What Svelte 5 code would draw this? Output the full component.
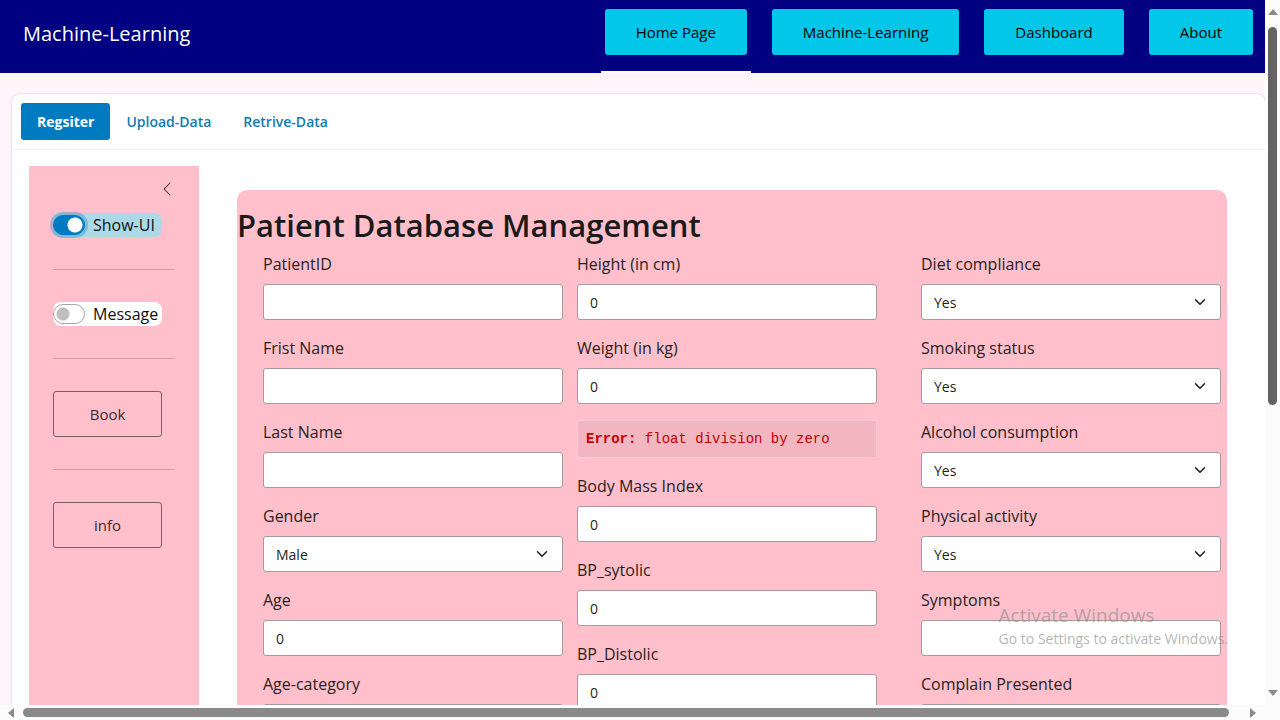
<script lang="ts">
	type Field = {
		id: string;
		label: string;
		type: 'text' | 'number' | 'select';
		value: string;
		options?: string[];
	};

	const pages = ['Home Page', 'Machine-Learning', 'Dashboard', 'About'];
	const tabs = ['Regsiter', 'Upload-Data', 'Retrive-Data'];
	const yesNo = ['Yes', 'No'];

	let activePage = $state('Home Page');
	let activeTab = $state('Regsiter');
	let showUi = $state(true);
	let showMessage = $state(false);

	let personal: Field[] = $state([
		{ id: 'patient_id', label: 'PatientID', type: 'text', value: '' },
		{ id: 'first_name', label: 'Frist Name', type: 'text', value: '' },
		{ id: 'last_name', label: 'Last Name', type: 'text', value: '' },
		{ id: 'gender', label: 'Gender', type: 'select', value: 'Male', options: ['Male', 'Female'] },
		{ id: 'age', label: 'Age', type: 'number', value: '0' },
		{ id: 'age_category', label: 'Age-category', type: 'text', value: '' }
	]);

	let body: Field[] = $state([
		{ id: 'height', label: 'Height (in cm)', type: 'number', value: '0' },
		{ id: 'weight', label: 'Weight (in kg)', type: 'number', value: '0' }
	]);

	let vitals: Field[] = $state([
		{ id: 'bmi', label: 'Body Mass Index', type: 'number', value: '0' },
		{ id: 'bp_systolic', label: 'BP_sytolic', type: 'number', value: '0' },
		{ id: 'bp_diastolic', label: 'BP_Distolic', type: 'number', value: '0' }
	]);

	let lifestyle: Field[] = $state([
		{ id: 'diet', label: 'Diet compliance', type: 'select', value: 'Yes', options: yesNo },
		{ id: 'smoking', label: 'Smoking status', type: 'select', value: 'Yes', options: yesNo },
		{ id: 'alcohol', label: 'Alcohol consumption', type: 'select', value: 'Yes', options: yesNo },
		{ id: 'activity', label: 'Physical activity', type: 'select', value: 'Yes', options: yesNo },
		{ id: 'symptoms', label: 'Symptoms', type: 'text', value: '' },
		{ id: 'complain', label: 'Complain Presented', type: 'text', value: '' }
	]);
</script>

{#snippet fieldList(fields: Field[])}
	{#each fields as field (field.id)}
		<div class="field">
			<label for={field.id}>{field.label}</label>
			{#if field.type === 'select'}
				<select id={field.id} class="control" bind:value={field.value}>
					{#each field.options ?? [] as option}
						<option value={option}>{option}</option>
					{/each}
				</select>
			{:else}
				<input
					id={field.id}
					class="control"
					inputmode={field.type === 'number' ? 'decimal' : 'text'}
					bind:value={field.value}
				/>
			{/if}
		</div>
	{/each}
{/snippet}

<div class="window">
	<div class="view">
		<header class="navbar">
			<span class="brand">Machine-Learning</span>
			<nav>
				{#each pages as page}
					<div class="nav-item" class:active={activePage === page}>
						<button class="nav-btn" onclick={() => (activePage = page)}>{page}</button>
					</div>
				{/each}
			</nav>
		</header>

		<main class="card">
			<div class="card-header" role="tablist">
				{#each tabs as tab}
					<button
						class="pill"
						class:active={activeTab === tab}
						role="tab"
						aria-selected={activeTab === tab}
						onclick={() => (activeTab = tab)}>{tab}</button
					>
				{/each}
			</div>

			<div class="card-body">
				<aside class="sidebar">
					<button class="collapse" aria-label="Toggle sidebar">
						<svg width="16" height="16" viewBox="0 0 16 16" fill="currentColor">
							<path
								d="M11.354 1.646a.5.5 0 0 1 0 .708L5.707 8l5.647 5.646a.5.5 0 0 1-.708.708l-6-6a.5.5 0 0 1 0-.708l6-6a.5.5 0 0 1 .708 0z"
							/>
						</svg>
					</button>
					<label class="switch blue">
						<input type="checkbox" role="switch" class="ring" bind:checked={showUi} />
						<span>Show-UI</span>
					</label>
					<hr />
					<label class="switch">
						<input type="checkbox" role="switch" bind:checked={showMessage} />
						<span>Message</span>
					</label>
					<hr />
					<button class="side-btn">Book</button>
					<hr />
					<button class="side-btn">info</button>
				</aside>

				<section class="panel">
					<h1>Patient Database Management</h1>
					<div class="columns">
						<div class="column">{@render fieldList(personal)}</div>
						<div class="column">
							{@render fieldList(body)}
							<pre class="error"><strong>Error:</strong> float division by zero</pre>
							{@render fieldList(vitals)}
						</div>
						<div class="column last">{@render fieldList(lifestyle)}</div>
					</div>
				</section>
			</div>
		</main>
	</div>

	<div class="scroll-y" aria-hidden="true">
		<svg width="10" height="6" viewBox="0 0 10 6"><path d="M5 0l5 6H0z" /></svg>
		<div class="track"><div class="thumb"></div></div>
		<svg width="10" height="6" viewBox="0 0 10 6"><path d="M0 0h10L5 6z" /></svg>
	</div>
	<div class="scroll-x" aria-hidden="true">
		<svg width="6" height="10" viewBox="0 0 6 10"><path d="M6 0v10L0 5z" /></svg>
		<div class="track"><div class="thumb"></div></div>
		<svg width="6" height="10" viewBox="0 0 6 10"><path d="M0 0l6 5-6 5z" /></svg>
	</div>

	<div class="watermark">
		<div class="watermark-title">Activate Windows</div>
		<div>Go to Settings to activate Windows.</div>
	</div>
</div>

<style>
	:global(body) {
		margin: 0;
	}

	.window {
		position: relative;
		display: grid;
		grid-template-columns: minmax(0, 1fr) 15px;
		grid-template-rows: minmax(0, 1fr) 15px;
		height: 100vh;
		background: #fcfcfc;
		font-family: 'Open Sans', 'Noto Sans', sans-serif;
		font-size: 16px;
		line-height: 24px;
		color: #1d1f21;
	}

	.window * {
		box-sizing: border-box;
	}

	button,
	input,
	select {
		font-family: inherit;
	}

	button {
		cursor: pointer;
	}

	.view {
		display: flex;
		flex-direction: column;
		overflow: hidden;
		background: #fff5fa;
	}

	.navbar {
		display: flex;
		flex-shrink: 0;
		justify-content: space-between;
		height: 73px;
		padding: 0 8px 0 23px;
		background: #000080;
	}

	.brand {
		padding-top: 22px;
		font-size: 20px;
		color: #fff;
	}

	nav {
		display: flex;
		gap: 17px;
	}

	.nav-item {
		padding: 9px 4px 0;
		border-bottom: 2px solid transparent;
	}

	.nav-item.active {
		border-bottom-color: #fff;
	}

	.nav-btn {
		height: 46px;
		padding: 0 31px;
		border: 0;
		border-radius: 3px;
		background: #03c7e8;
		color: #000;
		font-size: 15px;
		font-weight: 500;
	}

	.card {
		flex: 1;
		display: flex;
		flex-direction: column;
		min-height: 0;
		margin: 21px 0 0 12px;
		border-radius: 8px 8px 0 0;
		background: #fff;
		box-shadow: 0 0 2px rgba(0, 0, 0, 0.25);
	}

	.card-header {
		display: flex;
		padding: 9px;
		border-bottom: 1px solid #f2f2f2;
	}

	.pill {
		height: 37px;
		padding: 0 16px;
		border: 0;
		border-radius: 3px;
		background: transparent;
		color: #1279b3;
		font-size: 14px;
		font-weight: 600;
	}

	.pill.active {
		background: #007bc2;
		color: #fff;
		font-weight: 700;
	}

	.card-body {
		flex: 1;
		display: flex;
		min-height: 0;
		gap: 38px;
		padding: 16px 38px 0 17px;
	}

	.sidebar {
		display: flex;
		flex-direction: column;
		align-items: flex-start;
		width: 170px;
		flex-shrink: 0;
		padding: 15px 24px 0 24px;
		background: #ffc0cb;
	}

	.collapse {
		display: flex;
		align-self: flex-end;
		padding: 0;
		margin-bottom: 16px;
		border: 0;
		background: none;
		color: #3c2a2e;
	}

	.switch {
		display: flex;
		align-items: center;
		gap: 8px;
		width: 109px;
		border-radius: 8px;
		background: #fff;
		color: #111;
	}

	.switch.blue {
		background: #add8e6;
	}

	.switch input {
		appearance: none;
		width: 32px;
		height: 20px;
		flex-shrink: 0;
		margin: 0;
		border: 1px solid #a9a4a5;
		border-radius: 10px;
		background: radial-gradient(circle at 9px 9px, #bfbfbf 6px, transparent 7px) #fff;
	}

	.switch input:checked {
		border-color: #007bc2;
		background: radial-gradient(circle at 21px 9px, #fff 7px, transparent 8px) #007bc2;
	}

	.switch input.ring {
		box-shadow: 0 0 0 3px rgba(0, 123, 194, 0.3);
	}

	hr {
		width: 100%;
		height: 1px;
		margin: 32px 0;
		border: 0;
		background: #d2a0a9;
	}

	.side-btn {
		width: 109px;
		height: 46px;
		border: 1px solid #7c5c62;
		border-radius: 3px;
		background: transparent;
		color: #3c2a2e;
		font-size: 15px;
		font-weight: 500;
	}

	.panel {
		flex: 1;
		min-width: 0;
		margin-top: 24px;
		padding-top: 16px;
		border-radius: 10px 10px 0 0;
		background: #ffc0cb;
		overflow: hidden;
	}

	h1 {
		margin: 0 0 8px;
		font-size: 31px;
		line-height: 38px;
		font-weight: 600;
		color: #1a1a1a;
	}

	.columns {
		display: flex;
		gap: 14px;
		padding: 0 6px 0 26px;
	}

	.column {
		flex: 1;
		min-width: 0;
	}

	.column.last {
		margin-left: 30px;
	}

	.field {
		margin-bottom: 16px;
	}

	.field label {
		display: block;
		margin-bottom: 8px;
		color: #2a1d20;
	}

	.control {
		display: block;
		width: 100%;
		height: 36px;
		padding: 0 12px;
		border: 1px solid #a6999b;
		border-radius: 3px;
		background: #fff;
		color: #1d1f21;
		font-size: 14px;
	}

	select.control {
		appearance: none;
		background: #fff
			url("data:image/svg+xml,%3csvg xmlns='http://www.w3.org/2000/svg' viewBox='0 0 16 16'%3e%3cpath fill='none' stroke='%231d1f21' stroke-linecap='round' stroke-linejoin='round' stroke-width='2' d='m2 5 6 6 6-6'/%3e%3c/svg%3e")
			no-repeat right 14px center / 12px 12px;
	}

	.error {
		margin: 0 0 16px;
		padding: 6px 8px;
		border: 1px solid #f8ccd4;
		border-radius: 3px;
		background: #f2b6c1;
		color: #c10000;
		font-family: 'Liberation Mono', monospace;
		font-size: 14px;
	}

	.scroll-y,
	.scroll-x {
		display: flex;
		align-items: center;
		gap: 12px;
		background: #fcfcfc;
	}

	.scroll-y {
		flex-direction: column;
		padding: 9px 0;
	}

	.scroll-x {
		gap: 9px;
		padding: 0 9px 0 8px;
	}

	.scroll-y svg,
	.scroll-x svg {
		flex-shrink: 0;
		fill: #8a8a8a;
	}

	.track {
		flex: 1;
	}

	.thumb {
		border-radius: 5px;
	}

	.scroll-y .thumb {
		width: 9px;
		height: 58%;
		background: #636363;
	}

	.scroll-y .track {
		display: flex;
	}

	.scroll-x .thumb {
		width: 99%;
		height: 9px;
		background: #8a8a8a;
	}

	/* sits over the page, like the system overlay it is */
	.watermark {
		position: absolute;
		right: 52px;
		bottom: 69px;
		color: rgba(140, 140, 140, 0.65);
		font-size: 14px;
		pointer-events: none;
	}

	.watermark-title {
		font-size: 19px;
	}
</style>
